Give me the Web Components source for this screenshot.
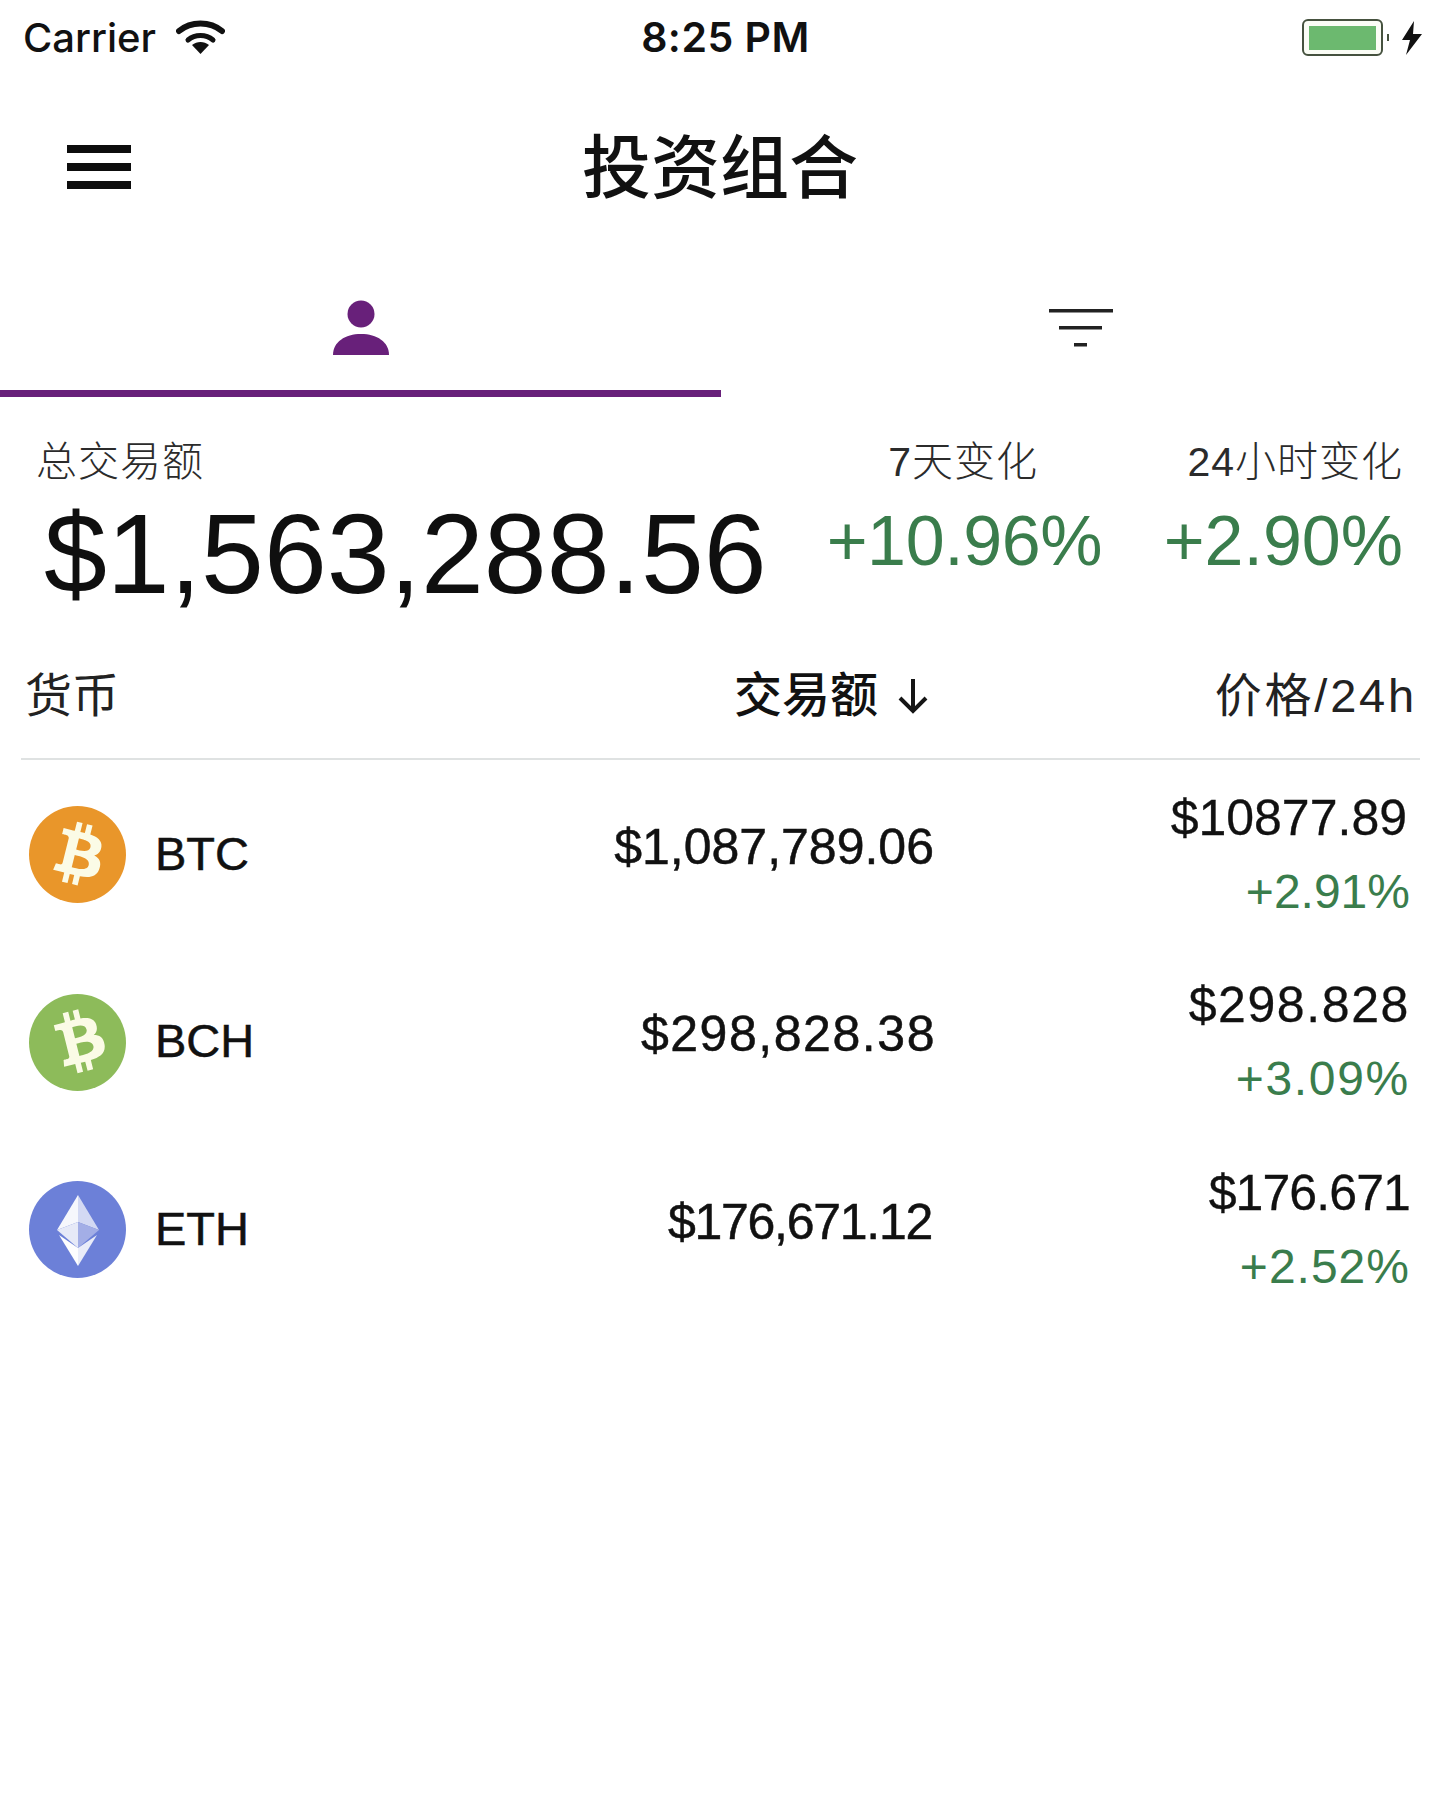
<!DOCTYPE html>
<html lang="zh-CN">
<head>
<meta charset="utf-8">
<title>投资组合</title>
<style>
    html, body {
        margin: 0;
        padding: 0;
        background: #fff;
    }
    body {
        width: 1440px;
        min-height: 1800px;
        color: #111;
        font-family: "Liberation Sans", "Noto Sans CJK SC", sans-serif;
    }
</style>
</head>
<body>
    <status-bar carrier="Carrier" time="8:25 PM"></status-bar>
    <nav-bar>投资组合</nav-bar>
    <tab-bar></tab-bar>
    <portfolio-summary>
        <summary-stat slot="total" kind="total" label="总交易额" value="$1,563,288.56"></summary-stat>
        <summary-stat slot="week" kind="week" label="7天变化" value="+10.96%"></summary-stat>
        <summary-stat slot="day" kind="day" label="24小时变化" value="+2.90%"></summary-stat>
    </portfolio-summary>
    <coin-header></coin-header>
    <coin-row coin="btc" symbol="BTC" amount="$1,087,789.06" price="$10877.89" change="+2.91%" price-end="3"></coin-row>
    <coin-row coin="bch" symbol="BCH" amount="$298,828.38" price="$298.828" change="+3.09%" amount-sp="1.55" amount-end="-2" price-sp="1.6" change-sp="1.7"></coin-row>
    <coin-row coin="eth" symbol="ETH" amount="$176,671.12" price="$176.671" change="+2.52%" amount-sp="-1.27" amount-end="2" price-sp="-0.9" change-sp="1"></coin-row>

<script>
// Barra de estado
let plantillaEstado = document.createElement('template');
plantillaEstado.innerHTML = `
    <style>
        :host {
            display: grid;
            grid-template-columns: 1fr auto 1fr;
            align-items: center;
            height: 74px;
            padding: 0 18px 0 23px;
            font-family: "Inter", "Liberation Sans", sans-serif;
            font-size: 41px;
            color: #111;
        }
        .izq { display: flex; align-items: center; gap: 20px; font-weight: 450; font-size: 40px; }
        .hora { font-weight: 600; padding-left: 6px; letter-spacing: 0.5px; }
        .der { display: flex; justify-content: flex-end; align-items: center; }
        svg { display: block; }
    </style>
    <div class="izq">
        <span id="carrier"></span>
        <svg width="49" height="34" viewBox="0 0 49 34">
            <path d="M3 11C15 1 34 1 46 11" fill="none" stroke="#111" stroke-width="6" stroke-linecap="round"/>
            <path d="M12 20C19 14 30 14 37 20" fill="none" stroke="#111" stroke-width="5" stroke-linecap="round"/>
            <path d="M24.5 34L16 25C21 21 28 21 33 25Z" fill="#111"/>
        </svg>
    </div>
    <span class="hora" id="hora"></span>
    <div class="der">
        <svg width="120" height="37" viewBox="0 0 120 37">
            <rect x="1" y="1" width="79" height="35" rx="5" fill="#fbfdf6" stroke="#46523f" stroke-width="2"/>
            <rect x="7" y="7" width="67" height="24" fill="#6cb96f"/>
            <rect x="85" y="15" width="2" height="7" fill="#46523f"/>
            <path d="M112 2L100 21H108L104 36L120 15H111Z" fill="#111"/>
        </svg>
    </div>
`;
class StatusBar extends HTMLElement {
    constructor() {
        super();
        this.attachShadow({mode: 'open'});
        this.shadowRoot.appendChild(plantillaEstado.content.cloneNode(true));
        this.shadowRoot.querySelector("#carrier").textContent = this.getAttribute("carrier");
        this.shadowRoot.querySelector("#hora").textContent = this.getAttribute("time");
    }
}
window.customElements.define('status-bar', StatusBar);

// Cabecera con menu y titulo
let plantillaNav = document.createElement('template');
plantillaNav.innerHTML = `
    <style>
        :host {
            display: grid;
            grid-template-columns: 1fr auto 1fr;
            align-items: center;
            height: 186px;
            padding: 0 67px;
            box-sizing: border-box;
        }
        .menu { display: flex; flex-direction: column; gap: 10px; width: 64px; }
        .menu i { display: block; height: 8px; background: #0d0d0d; }
        .titulo {
            font-family: "Noto Sans CJK SC", sans-serif;
            font-size: 69px;
            line-height: 80px;
            font-weight: 500;
            color: #111;
            margin-bottom: 8px;
        }
    </style>
    <div class="menu"><i></i><i></i><i></i></div>
    <div class="titulo"><slot></slot></div>
    <div></div>
`;
class NavBar extends HTMLElement {
    constructor() {
        super();
        this.attachShadow({mode: 'open'});
        this.shadowRoot.appendChild(plantillaNav.content.cloneNode(true));
    }
}
window.customElements.define('nav-bar', NavBar);

// Pestañas
let plantillaTabs = document.createElement('template');
plantillaTabs.innerHTML = `
    <style>
        :host {
            display: grid;
            grid-template-columns: 721px 719px;
            height: 137px;
        }
        .tab {
            display: flex;
            align-items: center;
            justify-content: center;
            padding-top: 6px;
            box-sizing: border-box;
            border-bottom: 7px solid transparent;
        }
        .activa {
            border-image: linear-gradient(#4d3f55 0 2px, #68207a 2px) 7;
        }
        svg { display: block; }
    </style>
    <div class="tab activa">
        <svg width="56" height="56" viewBox="0 0 56 56">
            <circle cx="28" cy="14" r="13.5" fill="#68207a"/>
            <path d="M0 55C0 42 12 34 28 34S56 42 56 55Z" fill="#68207a"/>
        </svg>
    </div>
    <div class="tab">
        <svg width="64" height="38" viewBox="0 0 64 38">
            <rect x="0" y="0" width="64" height="3.5" fill="#222"/>
            <rect x="10" y="17" width="43" height="3.5" fill="#222"/>
            <rect x="25" y="34" width="13" height="3.5" fill="#222"/>
        </svg>
    </div>
`;
class TabBar extends HTMLElement {
    constructor() {
        super();
        this.attachShadow({mode: 'open'});
        this.shadowRoot.appendChild(plantillaTabs.content.cloneNode(true));
    }
}
window.customElements.define('tab-bar', TabBar);

// Resumen
let plantillaResumen = document.createElement('template');
plantillaResumen.innerHTML = `
    <style>
        :host {
            display: flex;
            align-items: flex-start;
            padding: 41px 37px 0 36px;
        }
        .total { flex: 1; }
        .semana { width: 273px; margin-right: 64px; }
    </style>
    <div class="total"><slot name="total"></slot></div>
    <div class="semana"><slot name="week"></slot></div>
    <div><slot name="day"></slot></div>
`;
class PortfolioSummary extends HTMLElement {
    constructor() {
        super();
        this.attachShadow({mode: 'open'});
        this.shadowRoot.appendChild(plantillaResumen.content.cloneNode(true));
    }
}
window.customElements.define('portfolio-summary', PortfolioSummary);

let plantillaDato = document.createElement('template');
plantillaDato.innerHTML = `
    <style>
        :host {
            display: block;
            font-family: "Liberation Sans", "Noto Sans CJK SC", sans-serif;
        }
        .etiqueta {
            font-size: 41px;
            line-height: 48px;
            font-weight: 300;
            letter-spacing: 1px;
            color: #2b2b2b;
        }
        .valor {
            font-size: 70px;
            line-height: 70px;
            margin-top: 20px;
            color: #3a7d4c;
            white-space: nowrap;
        }
        :host([kind="total"]) .valor {
            font-size: 113px;
            line-height: 113px;
            margin: 12px 0 0 8px;
            color: #0f0f0f;
        }
        :host([kind="week"]) { text-align: center; }
        :host([kind="week"]) .valor { letter-spacing: -0.4px; }
        :host([kind="day"]) { text-align: right; }
    </style>
    <div class="etiqueta" id="etiqueta"></div>
    <div class="valor" id="valor"></div>
`;
class SummaryStat extends HTMLElement {
    constructor() {
        super();
        this.attachShadow({mode: 'open'});
        this.shadowRoot.appendChild(plantillaDato.content.cloneNode(true));
        this.shadowRoot.querySelector("#etiqueta").textContent = this.getAttribute("label");
        this.shadowRoot.querySelector("#valor").textContent = this.getAttribute("value");
    }
}
window.customElements.define('summary-stat', SummaryStat);

// Cabecera de la tabla
let plantillaCabecera = document.createElement('template');
plantillaCabecera.innerHTML = `
    <style>
        :host {
            display: grid;
            grid-template-columns: auto 1fr 489px;
            align-items: center;
            margin: 0 20px 0 21px;
            padding: 60px 3px 37px 4px;
            border-bottom: 2px solid #dfe2e2;
            font-family: "Liberation Sans", "Noto Sans CJK SC", sans-serif;
            font-size: 47px;
            line-height: 50px;
            color: #222;
        }
        .medio {
            display: flex;
            justify-content: flex-end;
            align-items: center;
            gap: 20px;
            font-size: 48px;
            color: #111;
            font-weight: 500;
        }
        .der { text-align: right; letter-spacing: 2.8px; }
        svg { display: block; }
    </style>
    <div>货币</div>
    <div class="medio">
        <span>交易额</span>
        <svg width="30" height="36" viewBox="0 0 30 36">
            <path d="M15 1V33M2 20L15 33L28 20" fill="none" stroke="#151515" stroke-width="4"/>
        </svg>
    </div>
    <div class="der">价格/24h</div>
`;
class CoinHeader extends HTMLElement {
    constructor() {
        super();
        this.attachShadow({mode: 'open'});
        this.shadowRoot.appendChild(plantillaCabecera.content.cloneNode(true));
    }
}
window.customElements.define('coin-header', CoinHeader);

// El dibujo de la B es comun a BTC y BCH, cambia solo el giro
const trazoB = "M17.288 10.291c.24-1.59-.974-2.45-2.64-3.03l.54-2.153-1.315-.33-.525 2.107c-.345-.087-.705-.167-1.064-.25l.526-2.127-1.32-.33-.54 2.165c-.285-.067-.565-.132-.84-.2l-1.815-.45-.35 1.407s.975.225.955.236c.535.136.63.486.615.766l-1.477 5.92c-.075.166-.24.406-.614.314.015.02-.96-.24-.96-.24l-.66 1.51 1.71.426.93.242-.54 2.19 1.32.327.54-2.17c.36.1.705.19 1.05.273l-.51 2.154 1.32.33.545-2.19c2.24.427 3.93.257 4.64-1.774.57-1.637-.03-2.58-1.217-3.196.854-.193 1.5-.76 1.68-1.93h.01zm-3.01 4.22c-.404 1.64-3.157.75-4.05.53l.72-2.9c.896.23 3.757.67 3.33 2.37zm.41-4.24c-.37 1.49-2.662.735-3.405.55l.654-2.64c.744.18 3.137.524 2.75 2.084v.006z";

const iconos = {
    btc: `<circle cx="48.5" cy="48.5" r="48.5" fill="#e9962a"/>
          <g transform="translate(48.5 48.5) scale(4.2) translate(-11.6 -12)"><path d="${trazoB}" fill="#fbfbe6" fill-rule="evenodd"/></g>`,
    bch: `<circle cx="48.5" cy="48.5" r="48.5" fill="#8dbb5a"/>
          <g transform="translate(49.5 48) rotate(-28) scale(4.2) translate(-11.6 -12)"><path d="${trazoB}" fill="#fbfbe6" fill-rule="evenodd"/></g>`,
    eth: `<circle cx="48.5" cy="48.5" r="48.5" fill="#6c80d8"/>
          <path d="M49 14L28 49L49 41Z" fill="#f6f7fc"/>
          <path d="M49 14L70 49L49 41Z" fill="#d3d9f3"/>
          <path d="M28 49L49 41V67Z" fill="#e6e9f7"/>
          <path d="M70 49L49 41V67Z" fill="#a3aee6"/>
          <path d="M30 54L49 67V85Z" fill="#fdfdfe"/>
          <path d="M68 54L49 67V85Z" fill="#e9ecf8"/>`
};

// Fila de moneda
let plantillaFila = document.createElement('template');
plantillaFila.innerHTML = `
    <style>
        :host {
            display: grid;
            grid-template-columns: auto 1fr 476px;
            align-items: center;
            height: 187.5px;
            padding: 1px 30px 0 29px;
            font-family: "Liberation Sans", sans-serif;
            color: #111;
            margin-bottom: -1px;
        }
        .moneda { display: flex; align-items: center; gap: 29px; }
        svg { display: block; }
        .simbolo { font-size: 47px; line-height: 54px; padding-bottom: 2px; -webkit-text-stroke: 0.5px #111; }
        .monto { font-size: 50px; line-height: 56px; text-align: right; padding-bottom: 16px; -webkit-text-stroke: 0.5px #111; }
        .precio { display: flex; flex-direction: column; align-items: flex-end; }
        .precio span { line-height: 73px; }
        #precio { font-size: 50px; -webkit-text-stroke: 0.3px #111; }
        #cambio { font-size: 48px; color: #3a7d4c; }
    </style>
    <div class="moneda">
        <svg width="97" height="97" viewBox="0 0 97 97" id="icono"></svg>
        <span class="simbolo" id="simbolo"></span>
    </div>
    <div class="monto" id="monto"></div>
    <div class="precio">
        <span id="precio"></span>
        <span id="cambio"></span>
    </div>
`;
class CoinRow extends HTMLElement {
    constructor() {
        super();
        this.attachShadow({mode: 'open'});
        this.shadowRoot.appendChild(plantillaFila.content.cloneNode(true));
        let monto = this.shadowRoot.querySelector("#monto");
        let precio = this.shadowRoot.querySelector("#precio");
        let cambio = this.shadowRoot.querySelector("#cambio");
        this.shadowRoot.querySelector("#icono").innerHTML = iconos[this.getAttribute("coin")];
        this.shadowRoot.querySelector("#simbolo").textContent = this.getAttribute("symbol");
        monto.textContent = this.getAttribute("amount");
        precio.textContent = this.getAttribute("price");
        cambio.textContent = this.getAttribute("change");
        // Los unos del original son mas estrechos: se ajusta cada cifra a su ancho
        monto.style.letterSpacing = (this.getAttribute("amount-sp") || 0) + "px";
        monto.style.marginRight = (this.getAttribute("amount-end") || 0) + "px";
        precio.style.letterSpacing = (this.getAttribute("price-sp") || 0) + "px";
        cambio.style.letterSpacing = (this.getAttribute("change-sp") || 0) + "px";
        precio.style.paddingRight = (this.getAttribute("price-end") || 0) + "px";
    }
}
window.customElements.define('coin-row', CoinRow);
</script>
</body>
</html>
